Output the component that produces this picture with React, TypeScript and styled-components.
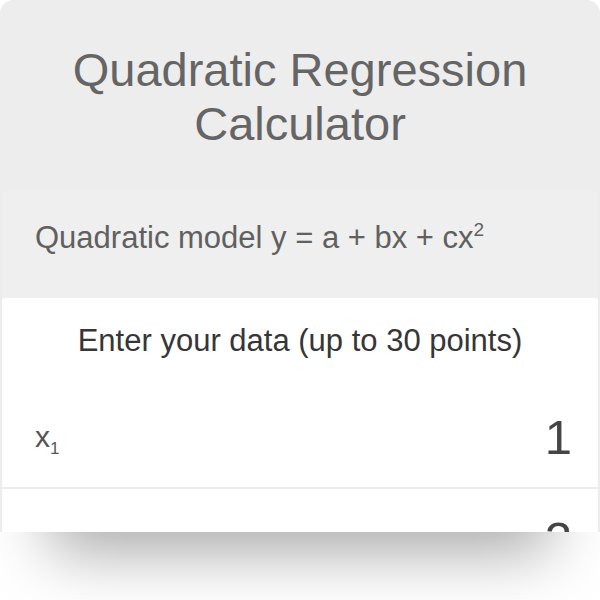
import React from "react";
import styled, { createGlobalStyle } from "styled-components";

const Global = createGlobalStyle`
  html, body { margin: 0; padding: 0; background: #ffffff; }
  body { font-family: "Liberation Sans", Arial, Helvetica, sans-serif; }
`;

const Page = styled.div`
  width: 600px;
  height: 600px;
  background: #ffffff;
  overflow: hidden;
`;

const Card = styled.div`
  width: 600px;
  height: 532px;
  box-sizing: border-box;
  padding: 0 2px;
  background: #ececec;
  border-radius: 14px 14px 0 0;
  overflow: hidden;
  display: flex;
  flex-direction: column;
  box-shadow: 0 70px 60px -50px rgba(0, 0, 0, 0.34);
`;

const Header = styled.div`
  background: #ededed;
  margin: 0 -2px;
  padding: 43px 20px 40px;
  text-align: center;
`;

const Title = styled.h1`
  margin: 0;
  font-size: 47px;
  line-height: 54px;
  font-weight: 400;
  color: #656565;
`;

const Model = styled.div`
  background: #efefef;
  padding: 29px 33px 42px;
  font-size: 31px;
  line-height: 36px;
  color: #606060;
`;

const Sup = styled.sup`
  font-size: 19px;
  line-height: 0;
  vertical-align: 12px;
`;

const Panel = styled.div`
  flex: 1;
  background: #ffffff;
  border-radius: 3px 3px 0 0;
  display: flex;
  flex-direction: column;
`;

const PanelHead = styled.div`
  padding: 25px 20px 28px;
  text-align: center;
  font-size: 31px;
  line-height: 36px;
  color: #363636;
`;

const Row = styled.div`
  flex: 0 0 auto;
  height: 100px;
  border-bottom: 2px solid #ededed;
  display: flex;
  align-items: center;
  justify-content: space-between;
  padding: 0 26px 0 33px;
`;

const Label = styled.span`
  font-size: 30px;
  color: #555555;
`;

const Sub = styled.sub`
  font-size: 17px;
  line-height: 0;
  vertical-align: -7px;
`;

const Value = styled.span`
  font-size: 49px;
  color: #454545;
`;

const rows = [
  { i: 1, v: 1 },
  { i: 2, v: 2 },
];

export default function App() {
  return (
    <Page>
      <Global />
      <Card>
        <Header>
          <Title>
            Quadratic Regression
            <br />
            Calculator
          </Title>
        </Header>
        <Model>
          Quadratic model y = a + bx + cx<Sup>2</Sup>
        </Model>
        <Panel>
          <PanelHead>Enter your data (up to 30 points)</PanelHead>
          {rows.map((r) => (
            <Row key={r.i}>
              <Label>
                x<Sub>{r.i}</Sub>
              </Label>
              <Value>{r.v}</Value>
            </Row>
          ))}
        </Panel>
      </Card>
    </Page>
  );
}
